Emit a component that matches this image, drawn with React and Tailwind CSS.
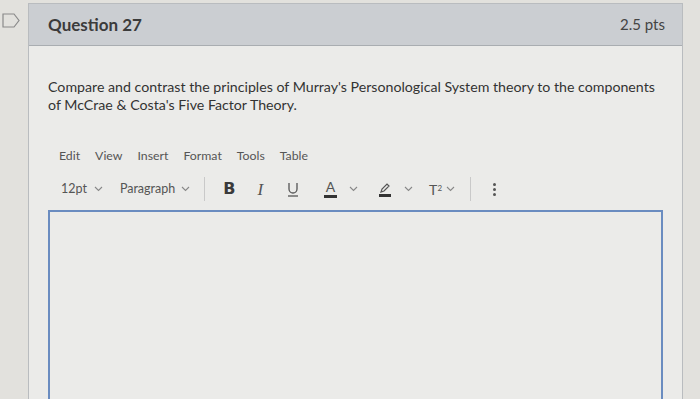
import React from "react";

// Quiz question card with rich text editor

const Chevron = ({ className = "" }) => (
  <svg width="9" height="6" viewBox="0 0 9 6" className={className} fill="none" stroke="currentColor" strokeWidth="1.1">
    <path d="M1 1l3.5 3.5L8 1" />
  </svg>
);

const Toolbar = () => (
  <div className="flex items-center h-[24px] text-[12.5px] text-[#555]">
    <span className="flex items-center gap-[7px] ml-[13px]">12pt <Chevron className="text-[#888]" /></span>
    <span className="flex items-center gap-[6px] ml-[17px]">Paragraph <Chevron className="text-[#888]" /></span>
    <span className="w-px h-[24px] bg-[#c9c9c9] ml-[14px]" />
    <span className="ml-[18px] text-[16px] font-bold text-[#3a3a3a]" style={{ fontFamily: "'DejaVu Sans', sans-serif" }}>B</span>
    <span className="ml-[22px] text-[17px] italic text-[#555]" style={{ fontFamily: "'Liberation Serif', serif" }}>I</span>
    <span className="ml-[24px] flex flex-col items-center">
      <svg width="12" height="15" viewBox="0 0 12 15" fill="none" stroke="#555" strokeWidth="1.3">
        <path d="M2 1v6a4 4 0 008 0V1" />
        <path d="M1 14h10" />
      </svg>
    </span>
    <span className="ml-[25px] flex items-center gap-[12px]">
      <span className="flex flex-col items-center leading-none">
        <span className="text-[14px] text-[#555]">A</span>
        <span className="w-[13px] h-[3px] bg-[#333] mt-[1px]" />
      </span>
      <Chevron className="text-[#888]" />
    </span>
    <span className="ml-[20px] flex items-center gap-[12px]">
      <svg width="14" height="15" viewBox="0 0 14 15" fill="none">
        <path d="M3 10l1-3 5-5 2 2-5 5z" stroke="#555" strokeWidth="1.2" />
        <rect x="1" y="12" width="12" height="3" fill="#333" />
      </svg>
      <Chevron className="text-[#888]" />
    </span>
    <span className="ml-[16px] flex items-center gap-[4px]">
      <span className="text-[14px] text-[#555]">T<sup className="text-[8px]">2</sup></span>
      <Chevron className="text-[#888]" />
    </span>
    <span className="w-px h-[24px] bg-[#c9c9c9] ml-[15px]" />
    <span className="ml-[22px] flex flex-col gap-[2px]">
      <span className="w-[3px] h-[3px] rounded-full bg-[#555]" />
      <span className="w-[3px] h-[3px] rounded-full bg-[#555]" />
      <span className="w-[3px] h-[3px] rounded-full bg-[#555]" />
    </span>
  </div>
);

export default function App() {
  return (
    <div className="w-[700px] h-[399px] overflow-hidden bg-[#e2e1dd] flex" style={{ fontFamily: "Lato, 'Open Sans', sans-serif" }}>
      <div className="w-[28px] shrink-0 pt-[13px] pl-[2px]">
        <svg width="18" height="15" viewBox="0 0 18 15" fill="none" stroke="#8a8a8a" strokeWidth="1.2">
          <path d="M1 1h11l5 6.5-5 6.5H1z" />
        </svg>
      </div>
      <div className="w-[655px] shrink-0 mt-[3px] border-x border-t border-[#b9bcbf] bg-[#ebebe9] flex flex-col">
        <div className="h-[42px] shrink-0 bg-[#cbced2] border-b border-[#a9adb1] flex items-center justify-between pl-[19px] pr-[17px]">
          <span className="text-[17px] font-bold text-[#3b3b3b]">Question 27</span>
          <span className="text-[15px] text-[#444]">2.5 pts</span>
        </div>
        <div className="px-[19px] pt-[32px]">
          <p className="text-[14.2px] leading-[18px] text-[#333] whitespace-nowrap">
            Compare and contrast the principles of Murray's Personological System theory to the components
            <br />
            of McCrae &amp; Costa's Five Factor Theory.
          </p>
          <div className="flex items-center gap-[15px] mt-[33px] ml-[11px] text-[12.3px] text-[#555]">
            <span>Edit</span>
            <span>View</span>
            <span>Insert</span>
            <span>Format</span>
            <span>Tools</span>
            <span>Table</span>
          </div>
          <div className="mt-[12px]">
            <Toolbar />
          </div>
          <div className="mt-[9px] w-[615px] h-[200px] border-2 border-[#6a8cc0] bg-[#ebebe9]" />
        </div>
      </div>
    </div>
  );
}
